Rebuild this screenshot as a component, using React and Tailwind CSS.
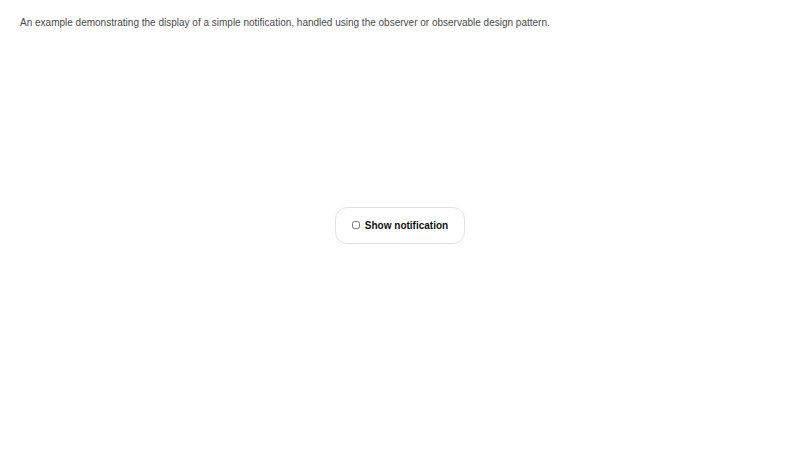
import { useState } from "react";

export default function App() {
  const [checked, setChecked] = useState(false);

  return (
    <div
      className="h-screen flex flex-col bg-white"
      style={{ fontFamily: '"Liberation Sans", Arial, sans-serif' }}
    >
      {/* description */}
      <p className="h-[44px] px-5 pt-[16px] text-[10px] leading-[13px] text-[#4a4a4a]">
        An example demonstrating the display of a simple notification, handled using the observer or observable design pattern.
      </p>

      {/* centered card */}
      <div className="flex-1 flex items-center justify-center pb-[44px]">
        <label className="w-[130px] h-[37px] flex items-center justify-center gap-[5px] border border-[#e2e2e2] rounded-[12px] cursor-pointer">
          <input
            type="checkbox"
            checked={checked}
            onChange={(e) => setChecked(e.target.checked)}
            className="w-[8px] h-[8px] m-0"
          />
          <span className="text-[10px] font-bold text-[#111]">Show notification</span>
        </label>
      </div>
    </div>
  );
}
